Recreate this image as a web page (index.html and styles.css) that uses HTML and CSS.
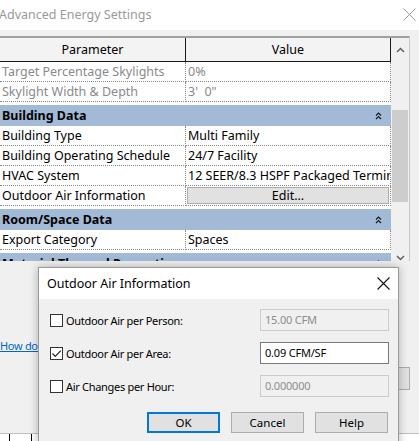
FILE: index.html
```html
<!DOCTYPE html>
<html lang="en">
<head>
    <meta charset="UTF-8">
    <title>Advanced Energy Settings</title>
    <link rel="stylesheet" href="styles.css">
</head>
<body>
    <div class="window">
        <div class="titlebar">
            <span class="title">Advanced Energy Settings</span>
            <svg class="win-close" width="13" height="13" viewBox="0 0 13 13">
                <path d="M0.5 0.5 L12.5 12.5 M12.5 0.5 L0.5 12.5" stroke="#9a9a9a" stroke-width="1" fill="none"/>
            </svg>
        </div>

        <!-- Property grid -->
        <div class="grid-wrap">
            <div class="grid">
                <div class="grid-head">
                    <div class="cell">Parameter</div>
                    <div class="cell">Value</div>
                </div>
                <div class="row disabled">
                    <div class="cell">Target Percentage Skylights</div>
                    <div class="cell">0%</div>
                </div>
                <div class="row disabled">
                    <div class="cell">Skylight Width &amp; Depth</div>
                    <div class="cell">3'&nbsp; 0"</div>
                </div>

                <div class="section">
                    <span>Building Data</span>
                    <svg class="collapse" width="7" height="8" viewBox="0 0 7 8">
                        <path d="M1 3.5 L3.5 1 L6 3.5 M1 7 L3.5 4.5 L6 7" stroke="#1a1a1a" stroke-width="1.2" fill="none"/>
                    </svg>
                </div>
                <div class="row">
                    <div class="cell">Building Type</div>
                    <div class="cell">Multi Family</div>
                </div>
                <div class="row">
                    <div class="cell">Building Operating Schedule</div>
                    <div class="cell">24/7 Facility</div>
                </div>
                <div class="row">
                    <div class="cell">HVAC System</div>
                    <div class="cell">12 SEER/8.3 HSPF Packaged Terminal Heat Pump</div>
                </div>
                <div class="row">
                    <div class="cell">Outdoor Air Information</div>
                    <div class="cell button-cell"><span class="edit-btn">Edit...</span></div>
                </div>

                <div class="section">
                    <span>Room/Space Data</span>
                    <svg class="collapse" width="7" height="8" viewBox="0 0 7 8">
                        <path d="M1 3.5 L3.5 1 L6 3.5 M1 7 L3.5 4.5 L6 7" stroke="#1a1a1a" stroke-width="1.2" fill="none"/>
                    </svg>
                </div>
                <div class="row">
                    <div class="cell">Export Category</div>
                    <div class="cell">Spaces</div>
                </div>

                <div class="section">
                    <span>Material Thermal Properties</span>
                    <svg class="collapse" width="7" height="8" viewBox="0 0 7 8">
                        <path d="M1 3.5 L3.5 1 L6 3.5 M1 7 L3.5 4.5 L6 7" stroke="#1a1a1a" stroke-width="1.2" fill="none"/>
                    </svg>
                </div>
            </div>

            <div class="scrollbar">
                <svg class="arrow" width="9" height="6" viewBox="0 0 9 6">
                    <path d="M1 5 L4.5 1.5 L8 5" stroke="#606060" stroke-width="1.5" fill="none"/>
                </svg>
                <div class="track"><div class="thumb"></div></div>
                <svg class="arrow" width="9" height="6" viewBox="0 0 9 6">
                    <path d="M1 1 L4.5 4.5 L8 1" stroke="#606060" stroke-width="1.5" fill="none"/>
                </svg>
            </div>
        </div>

        <div class="lower">
            <a href="#" class="help-link">How do I set energy settings?</a>
            <span class="side-btn">Save</span>
        </div>

        <div class="strip">
            <span class="tick"></span>
            <span class="tick"></span>
        </div>
    </div>

    <!-- Outdoor Air dialog -->
    <div class="dialog">
        <div class="dialog-title">
            <span>Outdoor Air Information</span>
            <svg class="dialog-close" width="13" height="13" viewBox="0 0 13 13">
                <path d="M0.5 0.5 L12.5 12.5 M12.5 0.5 L0.5 12.5" stroke="#111" stroke-width="1.1" fill="none"/>
            </svg>
        </div>
        <div class="dialog-body">
            <div class="field">
                <label class="check-label"><span class="checkbox"></span>Outdoor Air per Person:</label>
                <div class="textbox disabled">15.00 CFM</div>
            </div>
            <div class="field">
                <label class="check-label">
                    <span class="checkbox">
                        <svg width="11" height="11" viewBox="0 0 11 11">
                            <path d="M1.5 5.5 L4.3 8.3 L9.8 2.6" stroke="#222" stroke-width="1.2" fill="none"/>
                        </svg>
                    </span>Outdoor Air per Area:
                </label>
                <div class="textbox">0.09 CFM/SF</div>
            </div>
            <div class="field">
                <label class="check-label"><span class="checkbox"></span>Air Changes per Hour:</label>
                <div class="textbox disabled">0.000000</div>
            </div>
            <div class="dialog-buttons">
                <span class="btn default">OK</span>
                <span class="btn">Cancel</span>
                <span class="btn">Help</span>
            </div>
        </div>
    </div>
</body>
</html>
```

FILE: styles.css
```css
* {
    margin: 0;
    padding: 0;
    box-sizing: border-box;
    font-family: 'Noto Sans', sans-serif;
}

body {
    width: 419px;
    height: 441px;
    overflow: hidden;
    background: #f0f0f0;
    position: relative;
    font-size: 12px;
    color: #000;
}

.window {
    height: 441px;
    display: flex;
    flex-direction: column;
}

.titlebar {
    height: 30px;
    background: #fff;
    display: flex;
    align-items: center;
    justify-content: space-between;
    padding: 0 3px 2px 0;
    margin-bottom: 6px;
}

.title {
    font-size: 12.5px;
    color: #9a9a9a;
    margin-left: -1px;
}

/* property grid */

.grid-wrap {
    display: flex;
    height: 225px;
    border-top: 2px solid #a0a0a0;
    border-right: 1px solid #c8c8c8;
    width: 410px;
    overflow: hidden;
}

.grid {
    width: 391px;
    background: #fff;
    overflow: hidden;
    font-size: 12.5px;
}

.grid-head {
    display: grid;
    grid-template-columns: 186px 205px;
    height: 24px;
    background: #f3f3f3;
    border-bottom: 1px solid #1a1a1a;
}

.grid-head .cell {
    text-align: center;
    line-height: 23px;
    border-right: 1px solid #1a1a1a;
}

.row {
    display: grid;
    grid-template-columns: 186px 205px;
    height: 20px;
}

.row .cell {
    line-height: 19px;
    padding-left: 2px;
    border-bottom: 1px dotted #8a8a8a;
    border-right: 1px dotted #8a8a8a;
    white-space: nowrap;
    overflow: hidden;
}

.row.disabled .cell {
    color: #8a8a8a;
}

.button-cell {
    padding: 1px !important;
}

.edit-btn {
    display: block;
    height: 17px;
    line-height: 15px;
    text-align: center;
    background: #e1e1e1;
    border: 1px solid #adadad;
}

.section {
    margin-top: 3px;
    height: 21px;
    background: #a3bad6;
    font-weight: bold;
    padding-left: 2px;
    line-height: 21px;
    display: flex;
    justify-content: space-between;
    align-items: center;
    padding-right: 9px;
    font-size: 12.5px;
    white-space: nowrap;
}

.scrollbar {
    width: 18px;
    display: flex;
    flex-direction: column;
    align-items: center;
    background: #f0f0f0;
    padding-top: 9px;
}

.track {
    flex: 1;
    width: 100%;
    padding: 0 1px;
    margin: 5px 0 5px;
}

.thumb {
    margin-top: 52px;
    height: 92px;
    background: #cdcdcd;
}

.lower {
    flex: 1;
    display: flex;
    flex-direction: column;
    align-items: flex-start;
    padding-top: 77px;
}

.help-link {
    display: block;
    width: 38px;
    overflow: hidden;
    white-space: nowrap;
    color: #0066cc;
    text-decoration: underline;
    font-size: 11px;
    letter-spacing: -0.3px;
}

.side-btn {
    align-self: flex-end;
    margin-top: 14px;
    margin-right: 9px;
    width: 80px;
    height: 23px;
    background: #e1e1e1;
    border: 1px solid #adadad;
    text-align: center;
    line-height: 21px;
}

.strip {
    height: 8px;
    background: #fff;
    border-top: 1px solid #c0c0c0;
    display: flex;
    gap: 21px;
    padding-left: 9px;
}

.tick {
    width: 1px;
    background: #000;
}

/* dialog */

.dialog {
    position: absolute;
    left: 38px;
    top: 267px;
    width: 361px;
    height: 200px;
    background: #f0f0f0;
    border: 1px solid #9a9a9a;
    box-shadow: 0 0 9px rgba(0, 0, 0, 0.28);
}

.dialog-title {
    height: 31px;
    background: #fff;
    display: flex;
    align-items: center;
    justify-content: space-between;
    padding: 0 8px 0 8px;
    font-size: 12.5px;
}

.dialog-body {
    padding: 10px 9px 0 11px;
    font-size: 11px;
}

.field {
    display: flex;
    justify-content: space-between;
    align-items: center;
    height: 22px;
    margin-bottom: 11px;
}

.check-label {
    display: flex;
    align-items: center;
    gap: 3px;
    letter-spacing: -0.3px;
}

.checkbox {
    width: 13px;
    height: 13px;
    border: 1px solid #333;
    background: #fff;
    display: flex;
    align-items: center;
    justify-content: center;
}

.textbox {
    width: 129px;
    height: 22px;
    border: 1px solid #7a7a7a;
    background: #fff;
    padding-left: 4px;
    line-height: 20px;
    letter-spacing: -0.2px;
}

.textbox.disabled {
    border-color: #cccccc;
    background: #f0f0f0;
    color: #8d8d8d;
}

.dialog-buttons {
    display: flex;
    justify-content: flex-end;
    gap: 11px;
    margin-top: 15px;
    padding-right: 1px;
}

.btn {
    width: 73px;
    height: 21px;
    line-height: 19px;
    text-align: center;
    background: #e1e1e1;
    border: 1px solid #adadad;
    font-size: 11.5px;
}

.btn.default {
    border: 2px solid #0078d7;
    line-height: 17px;
}
```
